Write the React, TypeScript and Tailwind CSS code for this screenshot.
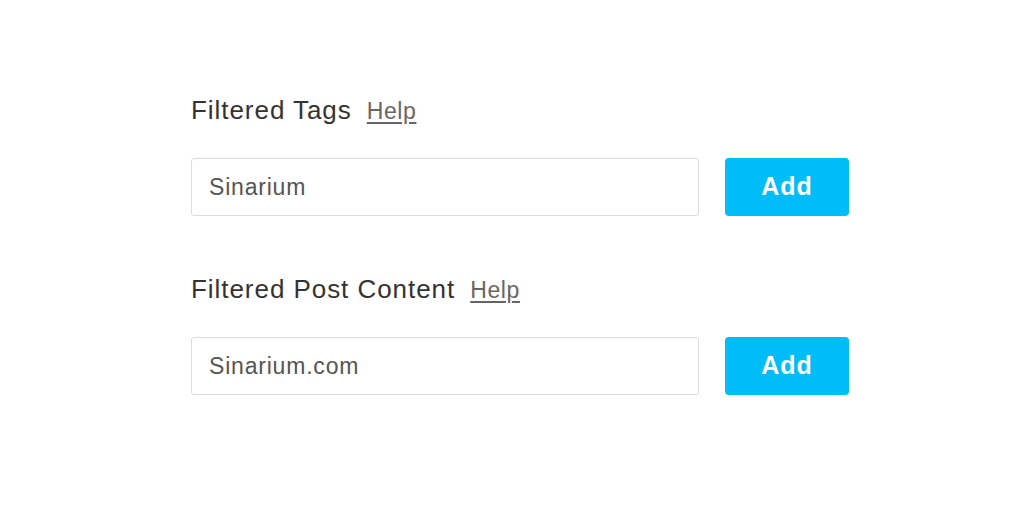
import React, { useState } from 'react';

const Field = ({ label, value }: { label: string; value: string }) => {
  const [v, setV] = useState(value);
  return (
    <div>
      <div className="flex items-baseline gap-[15px] h-[30px]">
        <span className="text-[26px] text-[#333] tracking-[0.95px]">{label}</span>
        <a href="#" className="text-[23px] text-[#666] underline underline-offset-[3px] tracking-[0.6px]">Help</a>
      </div>
      <div className="flex items-center gap-[26px] mt-[37px]">
        <input
          value={v}
          onChange={e => setV(e.target.value)}
          className="w-[508px] h-[58px] border border-[#dcdcdc] rounded-[3px] px-[17px] text-[23px] tracking-[0.8px] text-[#555] outline-none"
        />
        <button className="w-[124px] h-[58px] bg-[#00bdf7] rounded-[4px] text-white text-[25px] font-bold tracking-[1px]">Add</button>
      </div>
    </div>
  );
};

export default function App() {
  return (
    <div className="w-[1024px] h-[512px] bg-white" style={{ fontFamily: '"Liberation Sans", Arial, sans-serif' }}>
      <div className="pl-[191px] pt-[91px] flex flex-col gap-[54px]">
        <Field label="Filtered Tags" value="Sinarium" />
        <Field label="Filtered Post Content" value="Sinarium.com" />
      </div>
    </div>
  );
}
